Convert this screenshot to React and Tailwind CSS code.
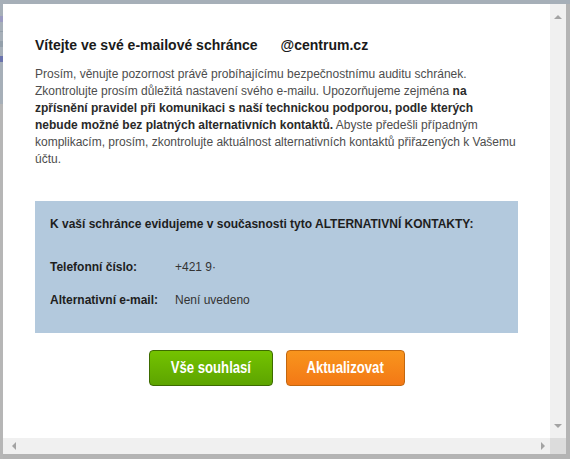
import React from 'react';

const ARIAL = { fontFamily: '"Liberation Sans", Arial, sans-serif' };

function Arrow({ dir }) {
  const pts = {
    up: '0,4 4,0 8,4',
    down: '0,0 8,0 4,4',
    left: '4,0 4,8 0,4',
    right: '0,0 0,8 4,4',
  }[dir];
  const vertical = dir === 'up' || dir === 'down';
  return (
    <svg width={vertical ? 8 : 4} height={vertical ? 4 : 8} className="block">
      <polygon points={pts} fill="#a3a3a3" />
    </svg>
  );
}

export default function App() {
  return (
    <div className="w-[570px] h-[459px] flex flex-col bg-[#b4b4b4] overflow-hidden" style={ARIAL}>
      {/* top strip of the page behind */}
      <div className="h-[4px] shrink-0 bg-[#a6afb8]" />

      <div className="flex flex-1 min-h-0">
        {/* left strip */}
        <div className="w-[3px] shrink-0 flex flex-col">
          <div className="h-[100px] bg-[#a6afb8] flex flex-col gap-[9px] pt-[12px]">
            <div className="h-[6px] bg-[#9a9ac0]" />
            <div className="h-[1px] bg-[#94a0ab]" />
            <div className="h-[6px] bg-[#94a0ab]" />
            <div className="h-[6px] bg-[#6a73ad]" />
          </div>
          <div className="flex-1 bg-[#b6b6b6]" />
        </div>

        {/* window */}
        <div className="flex-1 flex flex-col mr-[4px] mb-[5px]">
          <div className="flex flex-1 min-h-0">
            <div className="flex-1 bg-white px-[32px] pt-[33px]">
              <h1 className="text-[14px] leading-[16px] font-bold text-[#1a1a1a]">
                Vítejte ve své e-mailové schránce<span className="inline-block w-[23px]" />@centrum.cz
              </h1>

              <p className="mt-[13px] text-[12px] leading-[17px] text-[#4d4d4d]">
                Prosím, věnujte pozornost právě probíhajícímu bezpečnostnímu auditu schránek.
                Zkontrolujte prosím důležitá nastavení svého e-mailu. Upozorňujeme zejména{' '}
                <strong className="font-bold text-[#2a2a2a]">
                  na zpřísnění pravidel při komunikaci s naší technickou podporou, podle kterých
                  nebude možné bez platných alternativních kontaktů.
                </strong>{' '}
                Abyste předešli případným komplikacím, prosím, zkontrolujte aktuálnost alternativních
                kontaktů přiřazených k Vašemu účtu.
              </p>

              <div className="mt-[33px] bg-[#b3c9dd] px-[15px] pt-[16px] pb-[25px] text-[12px] leading-[15px] text-[#1e1e1e]">
                <div className="font-bold">
                  K vaší schránce evidujeme v současnosti tyto ALTERNATIVNÍ KONTAKTY:
                </div>
                <div className="mt-[28px] flex">
                  <span className="w-[125px] font-bold">Telefonní číslo:</span>
                  <span className="text-[#333]">+421 9·</span>
                </div>
                <div className="mt-[18px] flex">
                  <span className="w-[125px] font-bold">Alternativní e-mail:</span>
                  <span className="text-[#333]">Není uvedeno</span>
                </div>
              </div>

              <div className="mt-[17px] flex justify-center gap-[13px]">
                <button className="w-[124px] h-[36px] rounded-[4px] border border-[#3d6b00] bg-gradient-to-b from-[#74c300] to-[#5da400] text-white font-bold text-[16px]">
                  <span className="inline-block scale-x-[0.82]">Vše souhlasí</span>
                </button>
                <button className="w-[119px] h-[36px] rounded-[4px] border border-[#c2670f] bg-gradient-to-b from-[#f8951d] to-[#f37816] text-white font-bold text-[16px]">
                  <span className="inline-block scale-x-[0.82]">Aktualizovat</span>
                </button>
              </div>
            </div>

            {/* vertical scrollbar */}
            <div className="w-[16px] shrink-0 bg-[#f0f0f0] flex flex-col items-center justify-between pt-[11px] pb-[10px]">
              <Arrow dir="up" />
              <Arrow dir="down" />
            </div>
          </div>

          {/* horizontal scrollbar */}
          <div className="h-[16px] shrink-0 flex">
            <div className="flex-1 bg-[#f0f0f0] flex items-center justify-between pl-[9px] pr-[5px]">
              <Arrow dir="left" />
              <Arrow dir="right" />
            </div>
            <div className="w-[16px] bg-[#dcdcdc]" />
          </div>
        </div>
      </div>
    </div>
  );
}
